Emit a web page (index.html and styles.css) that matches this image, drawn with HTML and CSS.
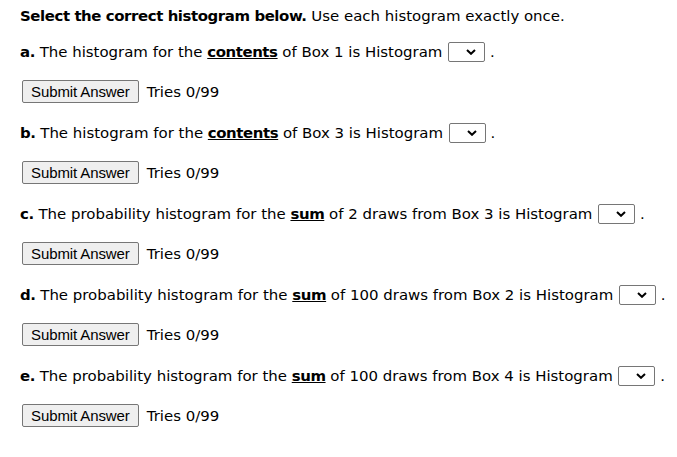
FILE: index.html
```html
<!DOCTYPE html>
<html>
<head>
<meta charset="utf-8">
<link rel="stylesheet" href="styles.css">
</head>
<body>
<div class="page">
  <p class="intro"><b>Select the correct histogram below.</b> Use each histogram exactly once.</p>

  <div class="question">
    <p class="prompt"><b>a.</b> The histogram for the <b class="key">contents</b> of Box 1 is Histogram <span class="select"><svg class="chev" width="10" height="6" viewBox="0 0 10 6"><path d="M1 1 L5 4.8 L9 1" fill="none" stroke="#000" stroke-width="2"/></svg></span> .</p>
    <div class="submit-row"><button class="submit">Submit Answer</button><span class="tries">Tries 0/99</span></div>
  </div>

  <div class="question">
    <p class="prompt"><b>b.</b> The histogram for the <b class="key">contents</b> of Box 3 is Histogram <span class="select"><svg class="chev" width="10" height="6" viewBox="0 0 10 6"><path d="M1 1 L5 4.8 L9 1" fill="none" stroke="#000" stroke-width="2"/></svg></span> .</p>
    <div class="submit-row"><button class="submit">Submit Answer</button><span class="tries">Tries 0/99</span></div>
  </div>

  <div class="question">
    <p class="prompt"><b>c.</b> The probability histogram for the <b class="key">sum</b> of 2 draws from Box 3 is Histogram <span class="select"><svg class="chev" width="10" height="6" viewBox="0 0 10 6"><path d="M1 1 L5 4.8 L9 1" fill="none" stroke="#000" stroke-width="2"/></svg></span> .</p>
    <div class="submit-row"><button class="submit">Submit Answer</button><span class="tries">Tries 0/99</span></div>
  </div>

  <div class="question">
    <p class="prompt"><b>d.</b> The probability histogram for the <b class="key">sum</b> of 100 draws from Box 2 is Histogram <span class="select"><svg class="chev" width="10" height="6" viewBox="0 0 10 6"><path d="M1 1 L5 4.8 L9 1" fill="none" stroke="#000" stroke-width="2"/></svg></span> .</p>
    <div class="submit-row"><button class="submit">Submit Answer</button><span class="tries">Tries 0/99</span></div>
  </div>

  <div class="question">
    <p class="prompt"><b>e.</b> The probability histogram for the <b class="key">sum</b> of 100 draws from Box 4 is Histogram <span class="select"><svg class="chev" width="10" height="6" viewBox="0 0 10 6"><path d="M1 1 L5 4.8 L9 1" fill="none" stroke="#000" stroke-width="2"/></svg></span> .</p>
    <div class="submit-row"><button class="submit">Submit Answer</button><span class="tries">Tries 0/99</span></div>
  </div>
</div>
</body>
</html>
```

FILE: styles.css
```css
html, body {
  margin: 0;
  padding: 0;
  background: #fff;
}

.page {
  padding: 6px 20px 0 20px;
  font-family: "DejaVu Sans", Verdana, sans-serif;
  font-size: 14.95px;
  color: #000;
}

.page b {
  letter-spacing: -0.42px;
}

.intro {
  margin: 0;
  height: 20px;
  line-height: 20px;
  white-space: nowrap;
}

.question {
  display: flex;
  flex-direction: column;
}

.prompt {
  margin: 16px 0 0 0;
  height: 20px;
  line-height: 20px;
  white-space: nowrap;
}

.key {
  text-decoration: underline;
}

.select {
  display: inline-flex;
  align-items: center;
  justify-content: flex-end;
  box-sizing: border-box;
  width: 37px;
  height: 20px;
  border: 1px solid #767676;
  border-radius: 2px;
  vertical-align: middle;
  padding-right: 8px;
  margin-top: -2px;
  margin-left: 1px;
}

.chev {
  display: block;
}

.submit-row {
  display: flex;
  align-items: center;
  gap: 8px;
  margin-top: 18px;
  margin-bottom: 4px;
  height: 23px;
}

.submit {
  font-family: "Liberation Sans", Arial, sans-serif;
  font-size: 15px;
  color: #000;
  background: #efefef;
  border: 1px solid #767676;
  border-radius: 2px;
  height: 23px;
  padding: 0 8px;
  margin-left: 2px;
  letter-spacing: -0.1px;
}

.tries {
  line-height: 20px;
}
```
